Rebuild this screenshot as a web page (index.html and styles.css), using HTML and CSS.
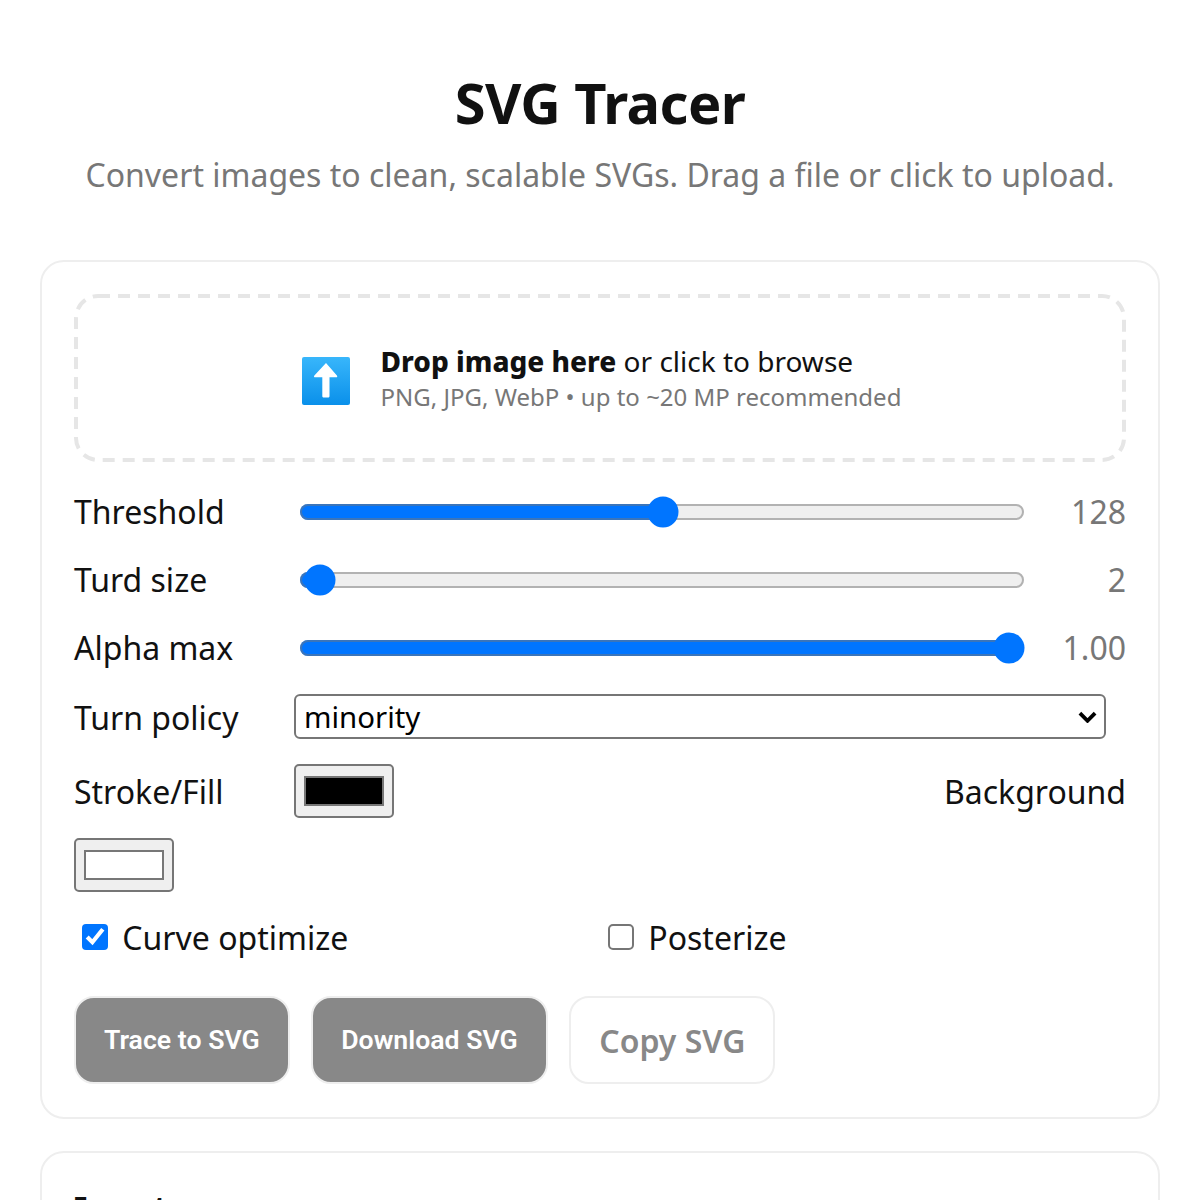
FILE: index.html
```html
<!DOCTYPE html>
<html lang="en">
<head>
<meta charset="utf-8">
<title>SVG Tracer</title>
<link rel="stylesheet" href="styles.css">
</head>
<body>
<main class="page">
  <header class="head">
    <h1>SVG Tracer</h1>
    <p>Convert images to clean, scalable SVGs. Drag a file or click to upload.</p>
  </header>
  <section class="card">
    <div class="drop">
      <svg class="drop-border" aria-hidden="true">
        <rect x="1" y="1" width="524" height="82" rx="11"/>
      </svg>
      <svg class="drop-icon" viewBox="3 3 26 26" aria-hidden="true">
        <defs>
          <linearGradient id="blue" x1="0" y1="0" x2="0" y2="1">
            <stop offset="0" stop-color="#38b6fb"/>
            <stop offset="1" stop-color="#0a90ea"/>
          </linearGradient>
        </defs>
        <rect x="3" y="3" width="26" height="26" rx="1.100" fill="url(#blue)"/>
        <path d="M16 6.200 21.900 13c.4.5.2 1-.4 1H17.900V24.200c0 .5-.4.8-.8.8H14.900c-.5 0-.9-.3-.9-.8V14H10.100c-.6 0-.8-.5-.4-1z" fill="#fff"/>
      </svg>
      <div>
        <div class="drop-title"><b>Drop image here</b> or click to browse</div>
        <div class="drop-sub">PNG, JPG, WebP • up to ~20 MP recommended</div>
      </div>
    </div>
    <div class="controls">
      <label class="lbl">Threshold</label>
      <input class="slider" type="range" min="0" max="255" value="128">
      <output class="val">128</output>
      <label class="lbl">Turd size</label>
      <input class="slider" type="range" min="0" max="280" value="2">
      <output class="val">2</output>
      <label class="lbl">Alpha max</label>
      <input class="slider" type="range" min="0" max="1" step="0.01" value="1">
      <output class="val">1.00</output>
      <label class="lbl">Turn policy</label>
      <select class="sel"><option>minority</option><option>majority</option><option>black</option><option>white</option></select>
      <label class="lbl lbl-color">Stroke/Fill</label>
      <input class="swatch" type="color" value="#000000">
      <label class="lbl lbl-color bg-lbl">Background</label>
      <input class="swatch" type="color" value="#ffffff">
    </div>
    <div class="checks">
      <label class="check"><input type="checkbox" checked> Curve optimize</label>
      <label class="check"><input type="checkbox"> Posterize</label>
    </div>
    <div class="actions">
      <button class="btn primary" disabled>Trace to SVG</button>
      <button class="btn primary wide" disabled>Download SVG</button>
      <button class="btn ghost" disabled>Copy SVG</button>
    </div>
  </section>
  <section class="card">
    <h2>Input</h2>
  </section>
</main>
</body>
</html>
```
FILE: styles.css
```css
html {
  zoom: 2;
  overflow: hidden;
}
body {
  margin: 0;
  font-family: "Noto Sans", sans-serif;
  color: #111;
  background: #fff;
}
.page {
  padding: 20px;
}
.head {
  text-align: center;
  margin-bottom: 30.5px;
}
h1 {
  margin: 10px 0 3.5px;
  font-size: 28px;
  line-height: 42px;
  font-weight: 700;
  letter-spacing: -0.01em;
}
.head p {
  margin: 0;
  font-size: 16px;
  line-height: 24px;
  color: #777;
}
.card {
  border: 1px solid #eee;
  border-radius: 12px;
  padding: 16px 16px 16.5px;
  margin-bottom: 16px;
}
.drop {
  position: relative;
  display: flex;
  align-items: center;
  justify-content: center;
  gap: 15.5px;
  height: 84px;
  padding-left: 1.5px;
  box-sizing: border-box;
  border-radius: 12px;
  margin-bottom: 13px;
}
.drop-border {
  position: absolute;
  inset: 0;
  width: 100%;
  height: 100%;
  fill: none;
  stroke: #e6e6e6;
  stroke-width: 2;
  stroke-dasharray: 6 4;
}
.drop-icon {
  width: 24px;
  height: 24px;
  margin-top: 3px;
}
.drop-title {
  font-size: 14px;
  line-height: 19px;
}
.drop-title b {
  font-weight: 800;
}
.drop-sub {
  font-size: 12px;
  line-height: 17px;
  color: #777;
}
.controls {
  display: grid;
  grid-template-columns: 100px 1fr 40.5px;
  gap: 10px;
  align-items: center;
}
.lbl,
.val {
  font-size: 16px;
  line-height: 24px;
}
.lbl-color {
  padding-top: 1px;
}
.val {
  text-align: right;
  color: #777;
}
.slider {
  width: auto;
  min-width: 0;
  margin: 2px 0 2px 2.5px;
}
.sel {
  grid-column: 2 / span 2;
  width: 406px;
  height: 22.5px;
  margin: 1px 0 2.5px;
  padding: 0 0 0 4px;
  appearance: none;
  background: #fff url("data:image/svg+xml,%3Csvg xmlns='http://www.w3.org/2000/svg' viewBox='0 0 10 6'%3E%3Cpath d='M1 1l4 4 4-4' fill='none' stroke='%23000' stroke-width='2'/%3E%3C/svg%3E") no-repeat right 3.5px center / 9.5px 6px;
  border: 1px solid #767676;
  border-radius: 3px;
  color: #000;
  font: 14.7px "Noto Sans", sans-serif;
}
.swatch {
  width: 50px;
  height: 27px;
}
.bg-lbl {
  grid-column: 3;
  justify-self: end;
  white-space: nowrap;
}
.checks {
  display: grid;
  grid-template-columns: 1fr 1fr;
  margin-top: 11px;
}
.check {
  font-size: 16px;
  line-height: 24px;
}
.actions {
  display: flex;
  gap: 10.5px;
  margin-top: 17px;
}
.btn {
  border: 1px solid #eee;
  border-radius: 10px;
  height: 44px;
  padding: 0 14px;
}
.primary {
  background: #888;
  color: #fff;
  font: 600 13.33px Roboto, sans-serif;
}
.wide {
  padding: 0 14.25px;
}
.ghost {
  background: #fff;
  color: #888;
  font: 600 16px "Noto Sans", sans-serif;
}
h2 {
  margin: 0;
  font-size: 17px;
}
```
